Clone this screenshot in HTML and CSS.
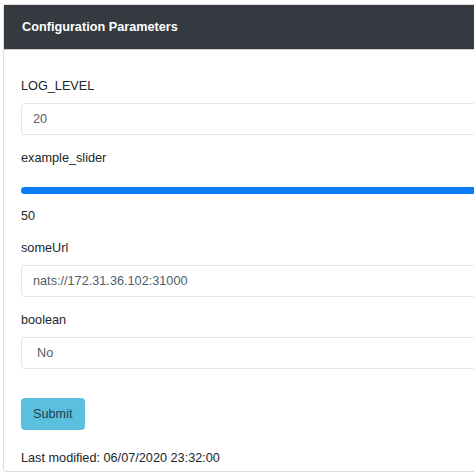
FILE: index.html
```html
<!DOCTYPE html>
<html>
<head>
<meta charset="utf-8">
<link rel="stylesheet" href="styles.css">
</head>
<body>
<div class="page">
  <div class="card">
    <div class="card-header">Configuration Parameters</div>
    <div class="card-body">
      <div class="group">
        <label class="lbl">LOG_LEVEL</label>
        <div class="field">20</div>
      </div>
      <div class="group">
        <label class="lbl">example_slider</label>
        <div class="slider"></div>
        <div class="value">50</div>
      </div>
      <div class="group">
        <label class="lbl">someUrl</label>
        <div class="field">nats://172.31.36.102:31000</div>
      </div>
      <div class="group">
        <label class="lbl">boolean</label>
        <div class="field select">No</div>
      </div>
      <button class="btn">Submit</button>
      <div class="modified">Last modified: 06/07/2020 23:32:00</div>
    </div>
  </div>
</div>
</body>
</html>
```
FILE: styles.css
```css
html, body {
  margin: 0;
  padding: 0;
  overflow: hidden;
  background: #fff;
}
.page {
  padding: 4px 0 0 3px;
  font-family: "Liberation Sans", Arial, sans-serif;
  font-size: 12.7px;
  color: #212529;
}
.card {
  width: 640px;
  border: 1px solid #dcdcdc;
  border-radius: 3px;
  background: #fff;
}
.card-header {
  background: #343a40;
  color: #fff;
  font-weight: bold;
  height: 44px;
  line-height: 44px;
  padding-left: 18px;
  border-bottom: 1px solid #c9cbcd;
}
.card-body {
  padding: 26px 0 0 17px;
  height: 395px;
}
.group {
  margin-bottom: 13px;
}
.lbl {
  display: block;
  height: 20px;
  line-height: 20px;
  margin-bottom: 7px;
}
.field {
  height: 30px;
  line-height: 30px;
  border: 1px solid #e4e7ea;
  border-radius: 4px;
  padding-left: 11px;
  color: #555d66;
  background: #fff;
}
.select {
  padding-left: 15px;
}
.slider {
  height: 7px;
  margin-top: 19px;
  background: #0a7bf4;
  border-radius: 4px 0 0 4px;
}
.value {
  height: 20px;
  line-height: 20px;
  margin-top: 12px;
  margin-bottom: -1px;
}
.btn {
  display: block;
  margin-top: 29px;
  height: 32px;
  padding: 0 12px;
  border: none;
  border-radius: 4px;
  background: #5bc0de;
  color: #1f3d4f;
  font-family: "Liberation Sans", Arial, sans-serif;
  font-size: 12.7px;
}
.modified {
  margin-top: 18px;
  height: 20px;
  line-height: 20px;
}
```
